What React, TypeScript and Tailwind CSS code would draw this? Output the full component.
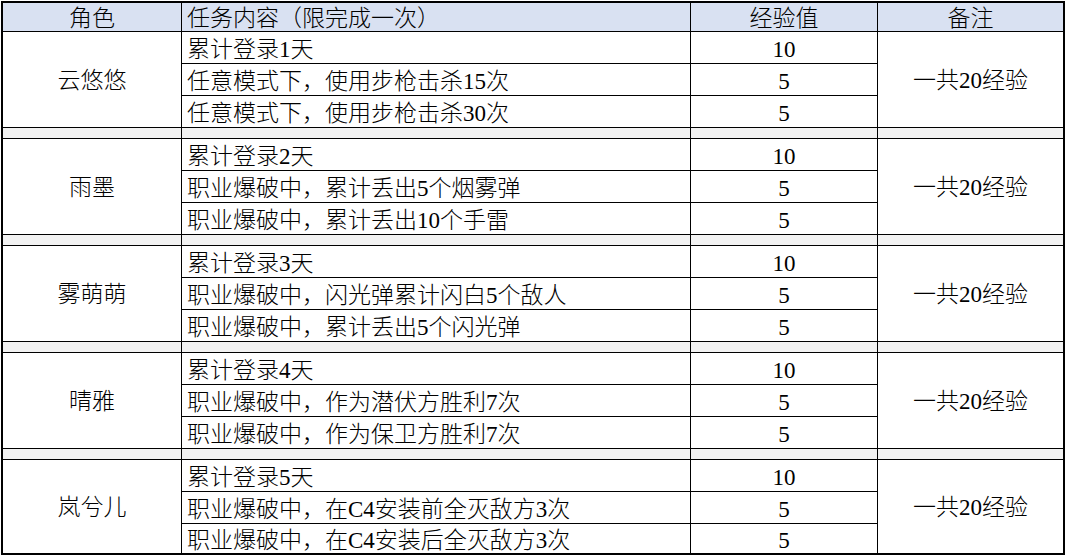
import React from "react";

type Group = { name: string; tasks: [string, string][] };

const groups: Group[] = [
  {
    name: "云悠悠",
    tasks: [
      ["累计登录1天", "10"],
      ["任意模式下，使用步枪击杀15次", "5"],
      ["任意模式下，使用步枪击杀30次", "5"],
    ],
  },
  {
    name: "雨墨",
    tasks: [
      ["累计登录2天", "10"],
      ["职业爆破中，累计丢出5个烟雾弹", "5"],
      ["职业爆破中，累计丢出10个手雷", "5"],
    ],
  },
  {
    name: "雾萌萌",
    tasks: [
      ["累计登录3天", "10"],
      ["职业爆破中，闪光弹累计闪白5个敌人", "5"],
      ["职业爆破中，累计丢出5个闪光弹", "5"],
    ],
  },
  {
    name: "晴雅",
    tasks: [
      ["累计登录4天", "10"],
      ["职业爆破中，作为潜伏方胜利7次", "5"],
      ["职业爆破中，作为保卫方胜利7次", "5"],
    ],
  },
  {
    name: "岚兮儿",
    tasks: [
      ["累计登录5天", "10"],
      ["职业爆破中，在C4安装前全灭敌方3次", "5"],
      ["职业爆破中，在C4安装后全灭敌方3次", "5"],
    ],
  },
];

export default function App() {
  return (
    <div className="w-[1066px] h-[556px] bg-white pl-px pt-px">
      <div
        className="w-[1064px] border-2 border-black text-[23px] leading-none font-light text-black"
        style={{ fontFamily: '"Liberation Serif", "Noto Sans CJK SC", serif' }}
      >
        {/* header */}
        <div className="grid grid-cols-[179px_509px_187px_185px] h-[29px] bg-[#d9e1f2]">
          <div className="border-r border-b border-black flex items-center justify-center pt-[3px]">角色</div>
          <div className="border-r border-b border-black flex items-center pl-[5px] pt-[3px]">任务内容（限完成一次）</div>
          <div className="border-r border-b border-black flex items-center justify-center pt-[3px]">经验值</div>
          <div className="border-b border-black flex items-center justify-center pt-[3px]">备注</div>
        </div>
        {groups.map((g, gi) => {
          const last = gi === groups.length - 1;
          return (
            <div key={g.name}>
              <div
                className={
                  last
                    ? "grid grid-cols-[179px_509px_187px_185px] grid-rows-[32px_32px_29px]"
                    : "grid grid-cols-[179px_509px_187px_185px] grid-rows-[32px_32px_32px]"
                }
              >
                <div
                  className={
                    "row-span-3 col-start-1 row-start-1 border-r border-black flex items-center justify-center pt-[2px] " +
                    (last ? "" : "border-b")
                  }
                >
                  {g.name}
                </div>
                {g.tasks.map(([t, v], ti) => {
                  const bb = !(last && ti === 2);
                  return (
                    <React.Fragment key={ti}>
                      <div
                        className={
                          "col-start-2 border-r border-black flex items-center pl-[5px] pt-[3px] " +
                          (bb ? "border-b" : "")
                        }
                        style={{ gridRowStart: ti + 1 }}
                      >
                        {t}
                      </div>
                      <div
                        className={
                          "col-start-3 border-r border-black flex items-center justify-center pt-[3px] " +
                          (bb ? "border-b" : "")
                        }
                        style={{ gridRowStart: ti + 1 }}
                      >
                        {v}
                      </div>
                    </React.Fragment>
                  );
                })}
                <div
                  className={
                    "row-span-3 col-start-4 row-start-1 border-black flex items-center justify-center pt-[2px] " +
                    (last ? "" : "border-b")
                  }
                >
                  一共20经验
                </div>
              </div>
              {!last && (
                <div className="grid grid-cols-[179px_509px_187px_185px] h-[11px] bg-[#f2f2f2]">
                  <div className="border-r border-b border-black" />
                  <div className="border-r border-b border-black" />
                  <div className="border-r border-b border-black" />
                  <div className="border-b border-black" />
                </div>
              )}
            </div>
          );
        })}
      </div>
    </div>
  );
}
